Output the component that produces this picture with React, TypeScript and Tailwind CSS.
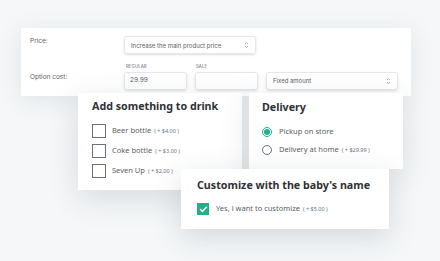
import { Check } from "lucide-react";

function Chevrons() {
  return (
    <svg width="5" height="8" viewBox="0 0 5 8" className="text-gray-400">
      <path d="M1 3 L2.5 1.5 L4 3 M1 5 L2.5 6.5 L4 5" fill="none" stroke="currentColor" strokeWidth="0.8" />
    </svg>
  );
}

function Box() {
  return <span className="w-[14px] h-[14px] border border-gray-500 bg-white shrink-0" />;
}

function Price({ v }: { v: string }) {
  return <span className="text-[5.5px] text-gray-500 ml-[3px] whitespace-nowrap">( + {v} )</span>;
}

export default function App() {
  return (
    <div className="relative w-[440px] h-[261px] overflow-hidden bg-[#f5f7f8] font-['Inter',sans-serif]">
      {/* Settings panel */}
      <div className="absolute left-[21px] top-[28px] w-[390px] h-[68px] bg-white shadow-[0_4px_24px_rgba(40,60,80,0.10)] text-[#5b6168]">
        <div className="flex items-start">
          <span className="w-[103px] pl-[9px] pt-[9px] text-[6.5px]">Price:</span>
          <div className="mt-[8px] w-[132px] h-[18px] border border-gray-200 rounded-[3px] shadow-sm flex items-center justify-between px-[6px]">
            <span className="text-[6px] whitespace-nowrap">Increase the main product price</span>
            <Chevrons />
          </div>
        </div>
        <div className="flex items-end mt-[10px]">
          <span className="w-[103px] pl-[9px] pb-[7px] text-[6.5px]">Option cost:</span>
          <div className="flex flex-col w-[63px]">
            <span className="text-[4.3px] tracking-wide pl-[2px] mb-[1.5px]">REGULAR</span>
            <div className="h-[18px] border border-gray-200 rounded-[3px] shadow-sm flex items-center px-[5px] text-[6.5px]">29.99</div>
          </div>
          <div className="flex flex-col w-[63px] ml-[8px]">
            <span className="text-[4.3px] tracking-wide pl-[1px] mb-[1.5px]">SALE</span>
            <div className="h-[18px] border border-gray-200 rounded-[3px] shadow-sm" />
          </div>
          <div className="ml-[8px] w-[132px] h-[18px] border border-gray-200 rounded-[3px] shadow-sm flex items-center justify-between px-[6px]">
            <span className="text-[6px]">Fixed amount</span>
            <Chevrons />
          </div>
        </div>
      </div>

      {/* Drink card */}
      <div className="absolute left-[78px] top-[93px] w-[164px] h-[97px] bg-white shadow-[0_8px_30px_rgba(40,60,80,0.14)] pl-[14px] pt-[6px] font-['Noto_Sans',sans-serif] text-[#5a5f66]">
        <div className="text-[10.7px] font-bold text-[#2e3135] leading-[14px] whitespace-nowrap">Add something to drink</div>
        <div className="flex flex-col gap-[6px] mt-[11px]">
          {[
            ["Beer bottle", "$4.00"],
            ["Coke bottle", "$3.00"],
            ["Seven Up", "$2.00"],
          ].map(([n, p]) => (
            <div key={n} className="flex items-center h-[14px]">
              <Box />
              <span className="ml-[6px] text-[7.5px] whitespace-nowrap">{n}</span>
              <Price v={p} />
            </div>
          ))}
        </div>
      </div>

      {/* Delivery card */}
      <div className="absolute left-[249px] top-[93px] w-[154px] h-[76px] bg-white shadow-[0_8px_30px_rgba(40,60,80,0.14)] pl-[13px] pt-[7px] font-['Noto_Sans',sans-serif] text-[#5a5f66]">
        <div className="text-[10.7px] font-bold text-[#2e3135] leading-[14px]">Delivery</div>
        <div className="flex flex-col gap-[8px] mt-[13px]">
          <div className="flex items-center h-[10px]">
            <span className="w-[10px] h-[10px] rounded-full border border-[#1fb08c] flex items-center justify-center">
              <span className="w-[6px] h-[6px] rounded-full bg-[#1fb08c]" />
            </span>
            <span className="ml-[7px] text-[7.5px]">Pickup on store</span>
          </div>
          <div className="flex items-center h-[10px]">
            <span className="w-[10px] h-[10px] rounded-full border border-gray-500" />
            <span className="ml-[7px] text-[7.5px] whitespace-nowrap">Delivery at home</span>
            <Price v="$29.99" />
          </div>
        </div>
      </div>

      {/* Customize card */}
      <div className="absolute left-[181px] top-[169px] w-[208px] h-[60px] bg-white shadow-[0_8px_30px_rgba(40,60,80,0.16)] pl-[16px] pt-[9px] font-['Noto_Sans',sans-serif] text-[#5a5f66]">
        <div className="text-[10.7px] font-bold text-[#2e3135] leading-[14px] whitespace-nowrap">Customize with the baby's name</div>
        <div className="flex items-center mt-[11px]">
          <span className="w-[12px] h-[12px] bg-[#1fb08c] flex items-center justify-center">
            <Check className="w-[9px] h-[9px] text-white" strokeWidth={4} />
          </span>
          <span className="ml-[7px] text-[7.5px] whitespace-nowrap">Yes, i want to customize</span>
          <Price v="$5.00" />
        </div>
      </div>
    </div>
  );
}
